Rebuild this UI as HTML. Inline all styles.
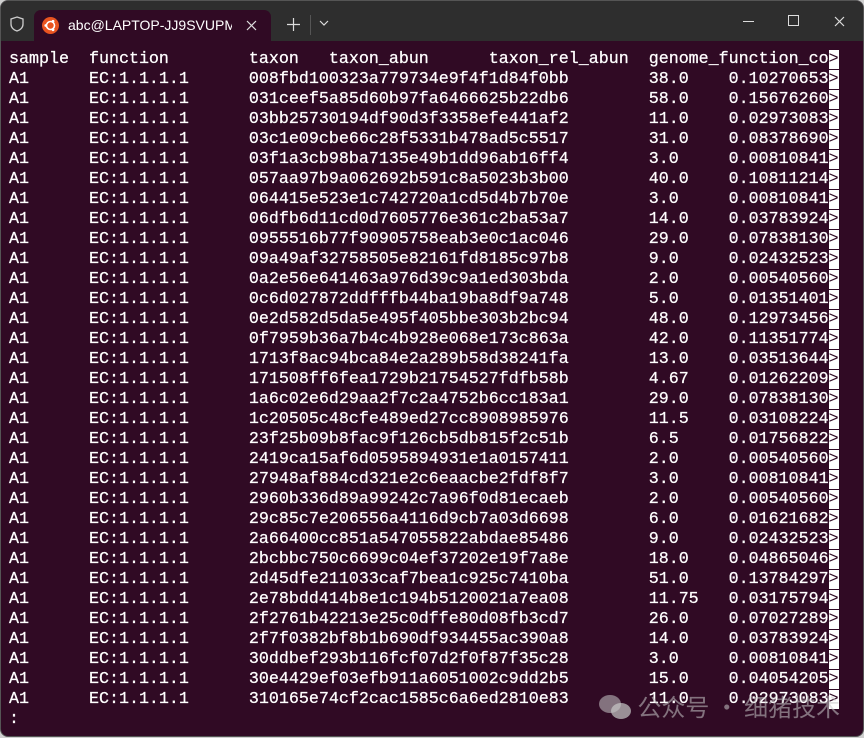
<!DOCTYPE html>
<html><head><meta charset="utf-8"><style>
html,body{margin:0;padding:0;background:#cfcfcf;width:864px;height:738px;overflow:hidden}
.win{position:absolute;left:0;top:0;width:862px;height:735px;background:#300a24;border-radius:8px;overflow:hidden;border:1px solid #555}
.tb{position:absolute;left:0;top:0;width:100%;height:40px;background:#2e2e2e}
.tab{position:absolute;left:33px;top:9px;width:237px;height:31px;background:#300a24;border-radius:7px 7px 0 0}
.tabt{position:absolute;left:34px;top:7px;color:#fff;font:14px "Liberation Sans",sans-serif;white-space:nowrap;width:164px;overflow:hidden}
pre{position:absolute;left:8px;top:49px;margin:0;font:16.67px/20px "Liberation Mono",monospace;color:#fff;-webkit-text-stroke:0.25px #fff}
pre b{font-weight:normal;background:#fff;color:#300a24;-webkit-text-stroke:0}
.wm{position:absolute;left:597px;top:687px;color:rgba(200,200,200,.55);font:24px "Noto Sans CJK SC",sans-serif;white-space:nowrap}
</style></head><body>
<div class="win">
<div class="tb">
<svg style="position:absolute;left:9px;top:15px" width="14" height="16" viewBox="0 0 14 16"><path d="M7 1 L13 3 V8 C13 12 10 14 7 15 C4 14 1 12 1 8 V3 Z" fill="none" stroke="#ccc" stroke-width="1.3"/></svg>
<div class="tab">
<svg style="position:absolute;left:8px;top:7px" width="17" height="17" viewBox="0 0 17 17"><circle cx="8.5" cy="8.5" r="8.5" fill="#e95420"/><circle cx="8.5" cy="8.5" r="4" fill="none" stroke="#fff" stroke-width="1.6"/><circle cx="3.8" cy="8.5" r="1.4" fill="#fff"/><circle cx="11" cy="4.3" r="1.4" fill="#fff"/><circle cx="11" cy="12.7" r="1.4" fill="#fff"/></svg>
<div class="tabt">abc@LAPTOP-JJ9SVUPM:</div>
<svg style="position:absolute;left:212px;top:10px" width="11" height="11"><path d="M1 1L10 10M10 1L1 10" stroke="#ddd" stroke-width="1.2"/></svg>
</div>
<svg style="position:absolute;left:286px;top:17px" width="13" height="13"><path d="M6.5 0V13M0 6.5H13" stroke="#ddd" stroke-width="1.2"/></svg>
<div style="position:absolute;left:309px;top:14px;width:1px;height:20px;background:#555"></div>
<svg style="position:absolute;left:318px;top:19px" width="10" height="6"><path d="M1 1L5 5L9 1" fill="none" stroke="#ddd" stroke-width="1.2"/></svg>
<div style="position:absolute;left:742px;top:20px;width:11px;height:1px;background:#ddd"></div>
<div style="position:absolute;left:787px;top:14px;width:9px;height:9px;border:1px solid #ddd"></div>
<svg style="position:absolute;left:833px;top:15px" width="11" height="11"><path d="M1 1L10 10M10 1L1 10" stroke="#ddd" stroke-width="1.2"/></svg>
</div>
<pre>sample  function        taxon   taxon_abun      taxon_rel_abun  genome_function_co<b>&gt;</b>
A1      EC:1.1.1.1      008fbd100323a779734e9f4f1d84f0bb        38.0    0.10270653<b>&gt;</b>
A1      EC:1.1.1.1      031ceef5a85d60b97fa6466625b22db6        58.0    0.15676260<b>&gt;</b>
A1      EC:1.1.1.1      03bb25730194df90d3f3358efe441af2        11.0    0.02973083<b>&gt;</b>
A1      EC:1.1.1.1      03c1e09cbe66c28f5331b478ad5c5517        31.0    0.08378690<b>&gt;</b>
A1      EC:1.1.1.1      03f1a3cb98ba7135e49b1dd96ab16ff4        3.0     0.00810841<b>&gt;</b>
A1      EC:1.1.1.1      057aa97b9a062692b591c8a5023b3b00        40.0    0.10811214<b>&gt;</b>
A1      EC:1.1.1.1      064415e523e1c742720a1cd5d4b7b70e        3.0     0.00810841<b>&gt;</b>
A1      EC:1.1.1.1      06dfb6d11cd0d7605776e361c2ba53a7        14.0    0.03783924<b>&gt;</b>
A1      EC:1.1.1.1      0955516b77f90905758eab3e0c1ac046        29.0    0.07838130<b>&gt;</b>
A1      EC:1.1.1.1      09a49af32758505e82161fd8185c97b8        9.0     0.02432523<b>&gt;</b>
A1      EC:1.1.1.1      0a2e56e641463a976d39c9a1ed303bda        2.0     0.00540560<b>&gt;</b>
A1      EC:1.1.1.1      0c6d027872ddfffb44ba19ba8df9a748        5.0     0.01351401<b>&gt;</b>
A1      EC:1.1.1.1      0e2d582d5da5e495f405bbe303b2bc94        48.0    0.12973456<b>&gt;</b>
A1      EC:1.1.1.1      0f7959b36a7b4c4b928e068e173c863a        42.0    0.11351774<b>&gt;</b>
A1      EC:1.1.1.1      1713f8ac94bca84e2a289b58d38241fa        13.0    0.03513644<b>&gt;</b>
A1      EC:1.1.1.1      171508ff6fea1729b21754527fdfb58b        4.67    0.01262209<b>&gt;</b>
A1      EC:1.1.1.1      1a6c02e6d29aa2f7c2a4752b6cc183a1        29.0    0.07838130<b>&gt;</b>
A1      EC:1.1.1.1      1c20505c48cfe489ed27cc8908985976        11.5    0.03108224<b>&gt;</b>
A1      EC:1.1.1.1      23f25b09b8fac9f126cb5db815f2c51b        6.5     0.01756822<b>&gt;</b>
A1      EC:1.1.1.1      2419ca15af6d0595894931e1a0157411        2.0     0.00540560<b>&gt;</b>
A1      EC:1.1.1.1      27948af884cd321e2c6eaacbe2fdf8f7        3.0     0.00810841<b>&gt;</b>
A1      EC:1.1.1.1      2960b336d89a99242c7a96f0d81ecaeb        2.0     0.00540560<b>&gt;</b>
A1      EC:1.1.1.1      29c85c7e206556a4116d9cb7a03d6698        6.0     0.01621682<b>&gt;</b>
A1      EC:1.1.1.1      2a66400cc851a547055822abdae85486        9.0     0.02432523<b>&gt;</b>
A1      EC:1.1.1.1      2bcbbc750c6699c04ef37202e19f7a8e        18.0    0.04865046<b>&gt;</b>
A1      EC:1.1.1.1      2d45dfe211033caf7bea1c925c7410ba        51.0    0.13784297<b>&gt;</b>
A1      EC:1.1.1.1      2e78bdd414b8e1c194b5120021a7ea08        11.75   0.03175794<b>&gt;</b>
A1      EC:1.1.1.1      2f2761b42213e25c0dffe80d08fb3cd7        26.0    0.07027289<b>&gt;</b>
A1      EC:1.1.1.1      2f7f0382bf8b1b690df934455ac390a8        14.0    0.03783924<b>&gt;</b>
A1      EC:1.1.1.1      30ddbef293b116fcf07d2f0f87f35c28        3.0     0.00810841<b>&gt;</b>
A1      EC:1.1.1.1      30e4429ef03efb911a6051002c9dd2b5        15.0    0.04054205<b>&gt;</b>
A1      EC:1.1.1.1      310165e74cf2cac1585c6a6ed2810e83        11.0    0.02973083<b>&gt;</b>
:</pre>
<div class="wm"><svg width="34" height="28" viewBox="0 0 34 28" style="vertical-align:-5px"><ellipse cx="12" cy="11" rx="11" ry="9" fill="rgba(200,200,200,.55)"/><ellipse cx="23" cy="18" rx="10" ry="8" fill="rgba(200,200,200,.7)"/></svg> 公众号 · 细猪技术</div>
</div>
</body></html>
